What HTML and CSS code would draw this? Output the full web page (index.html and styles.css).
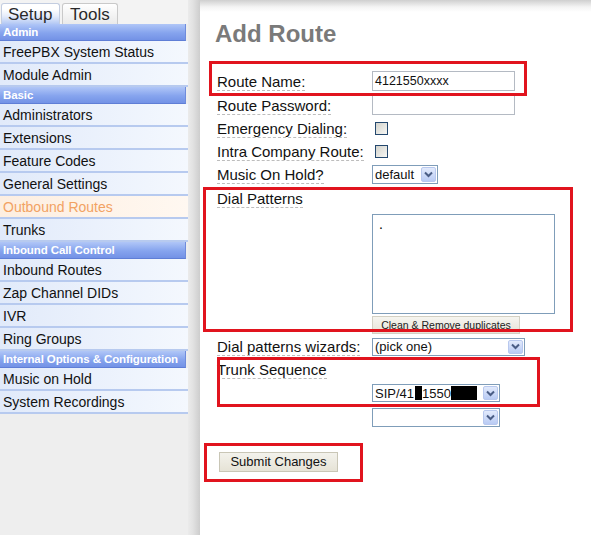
FILE: index.html
```html
<!DOCTYPE html>
<html>
<head>
<meta charset="utf-8">
<title>Add Route</title>
<link rel="stylesheet" href="styles.css">
</head>
<body>
<div class="page">
  <aside class="sidebar">
    <div class="tabs">
      <span class="tab tab-setup">Setup</span>
      <span class="tab tab-tools">Tools</span>
    </div>
    <nav class="nav">
      <div class="cat">Admin</div>
      <div class="item">FreePBX System Status</div>
      <div class="item">Module Admin</div>
      <div class="cat">Basic</div>
      <div class="item">Administrators</div>
      <div class="item">Extensions</div>
      <div class="item">Feature Codes</div>
      <div class="item">General Settings</div>
      <div class="item current">Outbound Routes</div>
      <div class="item">Trunks</div>
      <div class="cat">Inbound Call Control</div>
      <div class="item">Inbound Routes</div>
      <div class="item">Zap Channel DIDs</div>
      <div class="item">IVR</div>
      <div class="item">Ring Groups</div>
      <div class="cat">Internal Options &amp; Configuration</div>
      <div class="item">Music on Hold</div>
      <div class="item">System Recordings</div>
    </nav>
  </aside>
  <div class="gutter"></div>
  <main class="main">
    <h2 class="title">Add Route</h2>
    <div class="form">
      <div class="row h24">
        <span class="lbl"><span>Route Name:</span></span>
        <div class="input">4121550xxxx</div>
      </div>
      <div class="row h24">
        <span class="lbl"><span>Route Password:</span></span>
        <div class="input"></div>
      </div>
      <div class="row h23">
        <span class="lbl"><span>Emergency Dialing:</span></span>
        <span class="cb"></span>
      </div>
      <div class="row h23">
        <span class="lbl"><span>Intra Company Route:</span></span>
        <span class="cb"></span>
      </div>
      <div class="row h23">
        <span class="lbl"><span>Music On Hold?</span></span>
        <div class="sel sel-default"><span class="val">default</span><span class="arrow"><svg width="9" height="7" viewBox="0 0 9 7"><polyline points="1,1.5 4.5,5 8,1.5" fill="none" stroke="#4a5d85" stroke-width="2"/></svg></span></div>
      </div>
      <div class="row h24">
        <span class="lbl"><span>Dial Patterns</span></span>
      </div>
      <div class="ta">.</div>
      <div class="btn-small">Clean &amp; Remove duplicates</div>
      <div class="row h21 mt2">
        <span class="lbl"><span>Dial patterns wizards:</span></span>
        <div class="sel sel-wizard"><span class="val">(pick one)</span><span class="arrow"><svg width="9" height="7" viewBox="0 0 9 7"><polyline points="1,1.5 4.5,5 8,1.5" fill="none" stroke="#4a5d85" stroke-width="2"/></svg></span></div>
      </div>
      <div class="row h24">
        <span class="lbl"><span>Trunk Sequence</span></span>
      </div>
      <div class="sel sel-trunk first"><span class="val">SIP/41<span class="redact r1"></span>1550<span class="redact r2"></span></span><span class="arrow"><svg width="9" height="7" viewBox="0 0 9 7"><polyline points="1,1.5 4.5,5 8,1.5" fill="none" stroke="#4a5d85" stroke-width="2"/></svg></span></div>
      <div class="sel sel-trunk second"><span class="val"></span><span class="arrow"><svg width="9" height="7" viewBox="0 0 9 7"><polyline points="1,1.5 4.5,5 8,1.5" fill="none" stroke="#4a5d85" stroke-width="2"/></svg></span></div>
      <div class="submit">Submit Changes</div>
    </div>
  </main>
</div>
<div class="mark m1"></div>
<div class="mark m2"></div>
<div class="mark m3"></div>
<div class="mark m4"></div>
</body>
</html>
```
FILE: styles.css
```css
html, body {
  margin: 0;
  padding: 0;
}
body {
  font-family: "Liberation Sans", Arial, sans-serif;
  background: #ffffff;
  color: #111;
  position: relative;
}
.page {
  display: flex;
  min-height: 535px;
}
.sidebar {
  width: 188px;
  flex: none;
  background: #eeeeee;
}
.tabs {
  height: 24px;
  box-sizing: border-box;
  display: flex;
  align-items: flex-end;
  gap: 2px;
  padding-left: 1px;
  background: #f3f3f3;
}
.tab {
  height: 21px;
  box-sizing: border-box;
  border: 1px solid #c9c9c9;
  border-bottom: none;
  border-radius: 3px 3px 0 0;
  font-size: 17px;
  line-height: 21px;
  color: #2a2a2a;
  background: linear-gradient(#ffffff, #eaeaea);
}
.tab-setup {
  width: 59px;
  padding-left: 6px;
  background: linear-gradient(#ffffff 25%, #e6edfb 60%, #b3c8f4);
  border-color: #c3cde0;
}
.tab-tools {
  width: 56px;
  padding-left: 7px;
}
.cat {
  height: 17px;
  box-sizing: border-box;
  margin-right: 2px;
  background: linear-gradient(#b0c6f7, #86a4ee 55%, #7392e6);
  border-bottom: 1px solid #5f7ed6;
  border-right: 1px solid #6f8cdc;
  color: #ffffff;
  font-weight: bold;
  font-size: 11.5px;
  letter-spacing: -0.1px;
  line-height: 16px;
  padding-left: 3px;
  white-space: nowrap;
}
.item {
  height: 23px;
  box-sizing: border-box;
  border-bottom: 2px solid #b7caef;
  background: linear-gradient(to right, #e1eafa, #f4f8fe);
  font-size: 14px;
  line-height: 20px;
  padding: 1px 0 0 3px;
  color: #111;
  white-space: nowrap;
}
.item.current {
  color: #f2a263;
  background: linear-gradient(to right, #fdeee0, #fff8f1);
}
.gutter {
  width: 12px;
  flex: none;
  background: linear-gradient(to right, #ebebeb, #e2e2e2 40%, #cdcdcd);
}
.main {
  flex: 1;
  background: linear-gradient(#cfcfcf, #f4f4f4 7px, #ffffff 12px);
}
.title {
  margin: 20px 0 0 15px;
  font-size: 24px;
  line-height: 28px;
  color: #7a7a7a;
  font-weight: bold;
}
.form {
  margin: 21px 0 0 17px;
  display: flex;
  flex-direction: column;
  align-items: flex-start;
}
.row {
  display: flex;
  align-items: center;
}
.h24 { height: 24px; }
.h23 { height: 23px; }
.h21 { height: 21px; }
.mt2 { margin-top: 2px; }
.lbl {
  width: 155px;
  flex: none;
  font-size: 15px;
  color: #111;
  white-space: nowrap;
}
.lbl span {
  border-bottom: 1px dashed #bdbdbd;
}
.input {
  width: 143px;
  height: 20px;
  box-sizing: border-box;
  border: 1px solid #b4bac3;
  background: #fff;
  font-size: 12.5px;
  line-height: 18px;
  padding-left: 2px;
  color: #111;
}
.cb {
  width: 13px;
  height: 13px;
  margin-left: 3px;
  box-sizing: border-box;
  border: 1px solid #24486e;
  background: linear-gradient(135deg, #d3d3cc, #f7f7f4);
}
.sel {
  display: flex;
  align-items: center;
  justify-content: space-between;
  box-sizing: border-box;
  border: 1px solid #7f9db9;
  background: #fff;
  font-size: 13px;
  color: #111;
  padding-left: 2px;
}
.val {
  display: flex;
  align-items: center;
  white-space: nowrap;
}
.arrow {
  width: 15px;
  align-self: stretch;
  margin: 1px;
  box-sizing: border-box;
  border: 1px solid #b8c8ee;
  border-radius: 2px;
  background: linear-gradient(#e2eafc, #b9cbf4);
  display: flex;
  align-items: center;
  justify-content: center;
}
.sel-default {
  width: 66px;
  height: 19px;
}
.sel-wizard {
  width: 153px;
  height: 18px;
}
.sel-trunk {
  width: 128px;
  margin-left: 155px;
}
.sel-trunk.first {
  height: 18px;
  margin-top: 3px;
}
.sel-trunk.second {
  height: 19px;
  margin-top: 6px;
}
.redact {
  display: inline-block;
  height: 14px;
  background: #000;
}
.redact.r1 { width: 7px; margin-left: 1px; }
.redact.r2 { width: 26px; }
.ta {
  width: 183px;
  height: 100px;
  margin: 4px 0 0 155px;
  box-sizing: border-box;
  border: 1px solid #7f9db9;
  background: #fff;
  font-size: 14px;
  line-height: 14px;
  padding: 2px 6px;
  color: #000;
}
.btn-small {
  width: 148px;
  height: 18px;
  margin: 2px 0 0 155px;
  box-sizing: border-box;
  border: 1px solid #d3d0c3;
  background: linear-gradient(#f6f5f0, #e6e3d7);
  font-size: 10.5px;
  line-height: 16px;
  text-align: center;
  color: #222;
  white-space: nowrap;
}
.submit {
  width: 119px;
  height: 20px;
  margin: 25px 0 0 2px;
  box-sizing: border-box;
  border: 1px solid #c9c6b6;
  background: linear-gradient(#f3f2ec, #e6e3d6);
  font-size: 13px;
  line-height: 18px;
  text-align: center;
  color: #111;
}
.mark {
  position: absolute;
  box-sizing: border-box;
  border: 3px solid #e1141e;
  pointer-events: none;
}
.m1 { left: 209px; top: 61px; width: 318px; height: 35px; }
.m2 { left: 203px; top: 187px; width: 370px; height: 145px; }
.m3 { left: 217px; top: 357px; width: 323px; height: 50px; }
.m4 { left: 204px; top: 443px; width: 159px; height: 39px; }
```
